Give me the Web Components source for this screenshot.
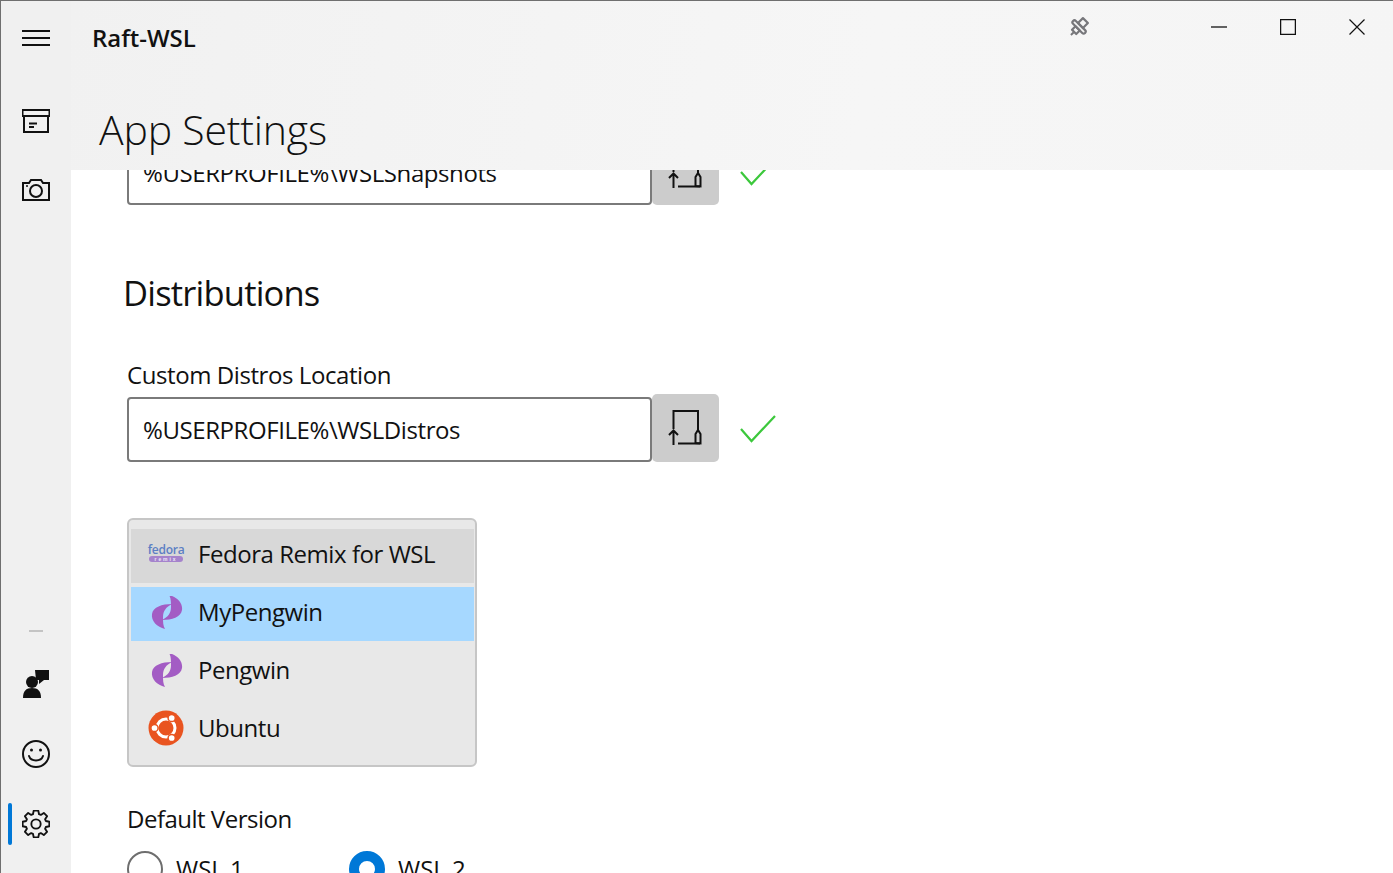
<!DOCTYPE html>
<html lang="en"><head><meta charset="utf-8"><title>Raft-WSL</title>
<style>
html,body{margin:0;padding:0;height:100%;overflow:hidden;background:#fff}
body{font-family:"Open Sans","Noto Sans",sans-serif;color:#111}
</style></head><body>
<raft-app>
  <nav-rail slot="rail">
    <rail-item style="--h:73px"><svg viewBox="0 0 28 16" width="28" height="16" fill="none" stroke="#111" stroke-width="2"><path d="M0 1h28M0 8h28M0 15h28"/></svg></rail-item>
    <rail-item gap><svg viewBox="0 0 28 24" width="28" height="24" fill="none" stroke="#111" stroke-width="2"><path d="M.5 1h27v6H.5zM2 7v16h24V7M7 14.500h8M7 18h5"/></svg></rail-item>
    <rail-item style="--h:68px"><svg viewBox="0 0 28 22" width="28" height="22" fill="none" stroke="#111" stroke-width="2"><path d="M1 4h6l2-3h10l2 3h6v17H1z"/><circle cx="14" cy="12" r="6"/><path d="M4 7h2" stroke-width="1.500"/></svg></rail-item>
    <rail-divider slot="bottom"></rail-divider>
    <rail-item slot="bottom"><svg viewBox="0 0 26 28" width="26" height="28" fill="#111"><path d="M12 0h14v10h-5l-5 4v-4h-3z"/><circle cx="9" cy="12" r="6"/><path d="M0 28c0-7 3-10 9-10s9 3 9 10z"/></svg></rail-item>
    <rail-item slot="bottom"><svg viewBox="0 0 28 28" width="28" height="28" fill="none" stroke="#111" stroke-width="2"><circle cx="14" cy="14" r="13"/><path d="M7 16c2 6 12 6 14 0" stroke-linecap="round"/><circle cx="9.500" cy="10" r="1.500" fill="#111" stroke="none"/><circle cx="18.500" cy="10" r="1.500" fill="#111" stroke="none"/></svg></rail-item>
    <rail-item slot="bottom" active><svg viewBox="0 0 30 30" width="28" height="28" fill="none" stroke="#111" stroke-width="2" stroke-linejoin="round"><path id="gear"/><circle cx="15" cy="15" r="5"/></svg></rail-item>
  </nav-rail>
  <title-header slot="header" app="Raft-WSL" page="App Settings"></title-header>
  <folder-row clipped value="%USERPROFILE%\WSLSnapshots"></folder-row>
  <section-title>Distributions</section-title>
  <folder-row label="Custom Distros Location" value="%USERPROFILE%\WSLDistros"></folder-row>
  <distro-list>
    <distro-item hover name="Fedora Remix for WSL"><logo-fedora></logo-fedora></distro-item>
    <distro-item selected name="MyPengwin"><logo-pengwin></logo-pengwin></distro-item>
    <distro-item name="Pengwin"><logo-pengwin></logo-pengwin></distro-item>
    <distro-item name="Ubuntu"><logo-ubuntu></logo-ubuntu></distro-item>
  </distro-list>
  <radio-group label="Default Version">
    <radio-option label="WSL 1"></radio-option>
    <radio-option checked label="WSL 2"></radio-option>
  </radio-group>
</raft-app>
<script>
(function(){let d='';const n=8,R=14.5,r=11;for(let i=0;i<n;i++){const a=i*2*Math.PI/n-Math.PI/2;const pts=[[r,-.3],[R,-.17],[R,.17],[r,.3]];pts.forEach(([m,o],j)=>{const t=a+o;d+=(i==0&&j==0?'M':'L')+(15+m*Math.cos(t)).toFixed(2)+' '+(15+m*Math.sin(t)).toFixed(2);});}
document.getElementById('gear').setAttribute('d',d+'Z');})();
function def(name,html,init){
  customElements.define(name,class extends HTMLElement{
    constructor(){super();this.attachShadow({mode:'open'}).innerHTML=html;}
    connectedCallback(){if(init)init(this,this.shadowRoot);}
  });
}
def('raft-app',`<style>
:host{display:flex;width:1393px;height:873px;box-sizing:border-box;border-top:1px solid #6f6f6f;border-left:1px solid #6f6f6f;overflow:hidden;background:#fff}
.main{flex:1;display:flex;flex-direction:column;min-width:0}
.scroll{flex:1;overflow:hidden;min-height:0}
.inner{margin-top:-33px;padding-left:56px;display:flex;flex-direction:column}
</style><slot name="rail"></slot><div class="main"><slot name="header"></slot><div class="scroll"><div class="inner"><slot></slot></div></div></div>`);
def('nav-rail',`<style>
:host{display:flex;flex-direction:column;width:70px;flex:none;background:#f0f0f0;padding-bottom:14px;box-sizing:border-box}
.top{display:flex;flex-direction:column}
.bottom{margin-top:auto;display:flex;flex-direction:column}
</style><div class="top"><slot></slot></div><div class="bottom"><slot name="bottom"></slot></div>`);
def('rail-item',`<style>
:host{display:flex;height:var(--h,70px);align-items:center;justify-content:center;position:relative;flex:none}
:host([gap]){margin-top:12px}
:host([active])::before{content:"";position:absolute;left:7px;top:14px;width:4px;height:42px;border-radius:2px;background:#0078d7}
</style><slot></slot>`);
def('rail-divider',`<style>:host{display:block;width:14px;height:2px;background:#c4c4c4;margin:0 auto 17px}</style>`);
def('title-header',`<style>
:host{display:block;height:169px;flex:none;background:linear-gradient(100deg,#f1f1f1,#f6f6f6 60%,#f5f5f5);position:relative;z-index:1}
.app{position:absolute;left:21px;top:20px;font:600 24px/34px "Open Sans",sans-serif;letter-spacing:-.05px;color:#111}
.page{position:absolute;left:28px;top:98px;font:300 41px/60px "Open Sans",sans-serif;letter-spacing:-.2px;color:#111}
.ctl{position:absolute;top:0;right:2px;display:flex;height:52px;align-items:center}
.pin{position:absolute;left:994px;top:14px}
button{all:unset;width:69px;height:52px;display:flex;align-items:center;justify-content:center}
</style><div class="app"></div><div class="page"></div>
<svg class="pin" width="26" height="26" viewBox="0 0 26 26" fill="none" stroke="#77777b" stroke-width="2.200" stroke-linejoin="round"><g transform="rotate(45 13 13)"><path d="M9.500 2.500h7v7h-7z"/><path d="M6.500 9.500h13a1.800 1.800 0 0 1 0 4h-13a1.800 1.800 0 0 1 0-4z"/><path d="M10 13.500h6v5h-6z"/><path d="M13 19v4" stroke-width="2"/></g></svg>
<div class="ctl"><button><svg width="16" height="2" viewBox="0 0 16 2"><path d="M0 1h16" stroke="#111" stroke-width="1.300"/></svg></button><button><svg width="16" height="16" viewBox="0 0 16 16"><rect x=".6" y=".6" width="14.800" height="14.800" fill="none" stroke="#111" stroke-width="1.300"/></svg></button><button><svg width="16" height="16" viewBox="0 0 16 16"><path d="M.5.500l15 15M15.500.500l-15 15" stroke="#111" stroke-width="1.200"/></svg></button></div>`,
(el,s)=>{s.querySelector('.app').textContent=el.getAttribute('app');s.querySelector('.page').textContent=el.getAttribute('page');});
def('section-title',`<style>:host{display:block;margin:63px 0 0 -4px;font:400 34.500px/50px "Open Sans",sans-serif;letter-spacing:-.8px;color:#111}</style><slot></slot>`);
def('folder-row',`<style>
:host{display:block}
.label{font:400 24px/36px "Open Sans",sans-serif;letter-spacing:-.42px;margin:39px 0 1px;color:#111}
.row{display:flex;align-items:flex-start;height:68px}
.input{box-sizing:border-box;width:525px;height:65px;margin-top:3px;border:2px solid #7a7a7a;border-radius:4px;background:#fff;display:flex;align-items:center;padding:0 14px;font:400 24px/36px "Open Sans",sans-serif;letter-spacing:-.42px;color:#111;white-space:nowrap}
.btn{width:67px;height:68px;background:#ccc;border-radius:5px;display:flex;align-items:center;justify-content:center}
.btn svg{margin:-2px 2px 0 0}
.ok{margin:2px 0 0 21px;align-self:center}
:host([clipped]) .label{display:none}
</style><div class="label"></div><div class="row"><div class="input"></div><div class="btn"><svg width="34" height="35" viewBox="0 0 34 35" fill="none" stroke="#111" stroke-width="2"><path d="M5.500 19V1H30v19"/><path d="M5.500 35V20M1 25l4.500-4.500L10 25"/><path d="M10 33.500h22"/><path d="M27.500 33V24l2.500-4 2.500 4v9.500z"/></svg></div><svg class="ok" width="36" height="28" viewBox="0 0 36 28" fill="none" stroke="#3cc83c" stroke-width="2.200"><path d="M1 14l10.500 12L35 1"/></svg></div>`,
(el,s)=>{s.querySelector('.label').textContent=el.getAttribute('label')||'';s.querySelector('.input').textContent=el.getAttribute('value');});
def('distro-list',`<style>:host{display:flex;flex-direction:column;gap:4px;box-sizing:border-box;width:350px;height:249px;margin-top:56px;padding:9px 1px 0 2px;border:2px solid #c6c6c6;border-radius:6px;background:#e8e8e8}</style><slot></slot>`);
def('distro-item',`<style>
:host{display:flex;align-items:center;height:54px;flex:none;font:400 24px/34px "Open Sans",sans-serif;letter-spacing:-.45px;color:#111}
:host([hover]){background:#d8d8d8}
:host([selected]){background:#a6d8ff}
.ic{width:36px;margin-left:17px;margin-right:14px;display:flex;justify-content:center;flex:none}
span{margin-top:-4px}
</style><div class="ic"><slot></slot></div><span></span>`,(el,s)=>{s.querySelector('span').textContent=el.getAttribute('name');});
def('logo-fedora',`<style>:host{display:flex;flex-direction:column;align-items:center;width:36px;margin-top:-5px}
.f{font:600 12px/10px "Open Sans",sans-serif;color:#5c7fc4;letter-spacing:-.25px}
.r{margin-top:1px;width:34px;height:6px;border-radius:3px;background:#a583cc;color:#efe8f7;font:700 5px/6px "Liberation Sans",sans-serif;letter-spacing:1.900px;text-align:center}
</style><span class="f">fedora</span><span class="r">remix</span>`);
def('logo-pengwin',`<style>:host{display:block;width:36px;height:36px}</style><svg width="36" height="36" viewBox="3 6 36 36" fill="#a35cc4"><path d="M24 5C32 7 38 13 37 20 36 27 27 30 17 30 23 27 26 23 26 17 26 12 26 8 24 5z"/><path d="M24 5C32 7 38 13 37 20 36 27 27 30 17 30 23 27 26 23 26 17 26 12 26 8 24 5z" transform="rotate(180 22 22)"/></svg>`);
def('logo-ubuntu',`<style>:host{display:block;width:36px;height:36px;margin-top:-4px}</style><svg width="36" height="36" viewBox="0 0 36 36"><circle cx="18" cy="18" r="17.500" fill="#e95420"/><circle cx="18" cy="18" r="9" fill="none" stroke="#fff" stroke-width="3"/><g fill="#fff" stroke="#e95420" stroke-width="1.500"><circle cx="6.500" cy="18" r="3.600"/><circle cx="23.700" cy="8" r="3.600"/><circle cx="23.700" cy="28" r="3.600"/></g></svg>`);
def('radio-group',`<style>:host{display:block;margin-top:34px}
.l{font:400 24px/36px "Open Sans",sans-serif;letter-spacing:-.5px;color:#111;margin-bottom:14px}
.o{display:flex;width:444px}
</style><div class="l"></div><div class="o"><slot></slot></div>`,(el,s)=>{s.querySelector('.l').textContent=el.getAttribute('label');});
def('radio-option',`<style>:host{display:flex;align-items:flex-start;width:222px;font:400 24px/36px "Open Sans",sans-serif;letter-spacing:0;color:#111}
i{box-sizing:border-box;width:36px;height:36px;border-radius:50%;border:2px solid #6e6e6e;margin-right:13px;flex:none}
:host([checked]) i{border:10px solid #0078d7;background:#fff}
</style><i></i><span></span>`,(el,s)=>{s.querySelector('span').textContent=el.getAttribute('label');});
</script>
</body></html>
